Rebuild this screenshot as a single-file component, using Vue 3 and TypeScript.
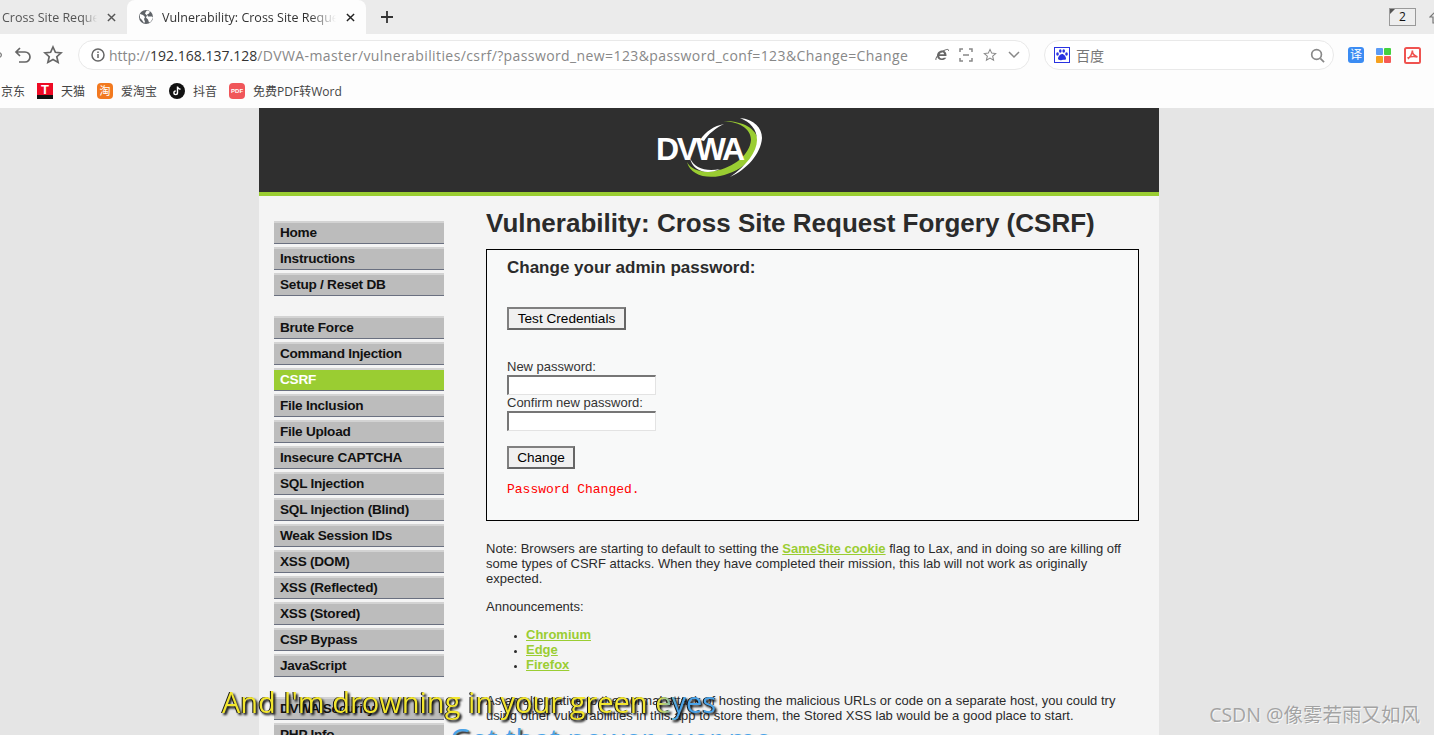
<script setup lang="ts">
const groups: string[][] = [
  ['Home', 'Instructions', 'Setup / Reset DB'],
  ['Brute Force', 'Command Injection', 'CSRF', 'File Inclusion', 'File Upload', 'Insecure CAPTCHA', 'SQL Injection', 'SQL Injection (Blind)', 'Weak Session IDs', 'XSS (DOM)', 'XSS (Reflected)', 'XSS (Stored)', 'CSP Bypass', 'JavaScript'],
  ['DVWA Security', 'PHP Info', 'About'],
]
const announcements = ['Chromium', 'Edge', 'Firefox']
</script>

<template>
  <div class="screen">
    <div class="tabbar">
      <div class="tab">
        <span class="tab-title">Cross Site Request</span>
        <svg class="close" viewBox="0 0 10 10"><path d="M1 1l8 8M9 1l-8 8" /></svg>
      </div>
      <div class="tab active">
        <svg class="globe" viewBox="0 0 16 16"><circle cx="8" cy="8" r="7" fill="#5f6368" /><path d="M2 5l3 1 2 2-1 2 1 3-1 1-2-3-2-2zM9 1.500l3 1-1 2-2 1 1 2 4 0 1 1-2 4-2 1-1-3-2-2 1-2-1-1-1-1 1-2z" fill="#fff" /></svg>
        <span class="tab-title">Vulnerability: Cross Site Request</span>
        <svg class="close dark" viewBox="0 0 10 10"><path d="M1 1l8 8M9 1l-8 8" /></svg>
      </div>
      <svg class="plus" viewBox="0 0 14 14"><path d="M7 1v12M1 7h12" /></svg>
      <div class="tab-count"><i></i>2</div>
      <svg class="pin" viewBox="0 0 14 16"><path d="M1 8l6-6 6 6H10v6H4V8z" /></svg>
    </div>

    <div class="toolbar">
      <svg class="back-tip" viewBox="0 0 2 8"><path d="M-1 1l3 3-3 3" /></svg>
      <svg class="tool undo" viewBox="0 0 18 18"><path d="M6 2L2 6l4 4M2 6h9a4.500 4.500 0 0 1 0 10H5" /></svg>
      <svg class="tool star" viewBox="0 0 20 20"><path d="M10 2l2.400 5.300 5.700.6-4.300 3.800 1.300 5.700L10 14.500l-5.100 2.900 1.300-5.700L1.900 7.900l5.700-.6z" /></svg>
      <div class="address">
        <svg class="info" viewBox="0 0 14 14"><circle cx="7" cy="7" r="6" /><path d="M7 6v4M7 3.500v1.500" /></svg>
        <span class="url"><span class="muted">http://</span>192.168.137.128<span class="muted path">/DVWA-master/vulnerabilities/csrf/?password_new=123&amp;password_conf=123&amp;Change=Change</span></span>
        <div class="address-icons">
          <svg class="ie" viewBox="0 0 14 14"><path d="M3 8h8.500C11.800 4.500 9.800 2.500 7 2.500 4.200 2.500 2 4.800 2 7.800c0 2.600 2 4.200 4.700 4.200 2 0 3.600-.8 4.600-2.300H8.800c-.5.500-1.200.8-2 .8-1.300 0-2.500-.9-2.500-2.500zM4.500 6.300c.2-1.200 1.200-2 2.400-2s2.100.8 2.200 2z" /><path class="ie-ring" d="M1 12c-1-2 3-7 8-9.500 3-1.500 5-1.500 4.500.5" /></svg>
          <svg class="small" viewBox="0 0 14 14"><path d="M1 4V1h3M10 1h3v3M1 10v3h3M10 13h3v-3M4 7h6" /></svg>
          <svg class="small" viewBox="0 0 20 20"><path d="M10 2l2.400 5.300 5.700.6-4.300 3.800 1.300 5.700L10 14.500l-5.100 2.900 1.300-5.700L1.900 7.900l5.700-.6z" /></svg>
          <svg class="small" viewBox="0 0 14 14"><path d="M2 4l5 5 5-5" /></svg>
        </div>
      </div>
      <div class="search">
        <svg class="paw" viewBox="0 0 16 16"><rect x=".5" y=".5" width="15" height="15" fill="#fff" stroke="#2932e1" /><g fill="#2932e1"><ellipse cx="3.500" cy="7" rx="1.300" ry="1.700" /><ellipse cx="6.300" cy="4" rx="1.300" ry="1.700" /><ellipse cx="9.700" cy="4" rx="1.300" ry="1.700" /><ellipse cx="12.500" cy="7" rx="1.300" ry="1.700" /><path d="M8 7c-2 0-4 3-4 4.500S6 13.500 8 13s4 .5 4-1.500S10 7 8 7z" /></g></svg>
        <span class="search-text">百度</span>
        <svg class="magnifier" viewBox="0 0 16 16"><circle cx="7" cy="7" r="5.200" /><path d="M11 11l4 4" /></svg>
      </div>
      <div class="extensions">
        <div class="ext-translate">译</div>
        <div class="ext-grid"><i class="c1"></i><i class="c2"></i><i class="c3"></i><i class="c4"></i></div>
        <svg class="ext-pdf" viewBox="0 0 17 17"><rect x="1" y="1" width="15" height="15" rx="1.500" fill="#fff" stroke="#ef5350" stroke-width="2" /><path d="M8.500 3.500c-1 2 .5 4-4.500 8.500M8.500 3.500c-.5 3 1.500 5 5 6.500M3.500 11c3-1.500 6-2 10-1" fill="none" stroke="#ef5350" stroke-width="1.500" /></svg>
      </div>
    </div>

    <div class="bookmarks">
      <span class="mark first">京东</span>
      <span class="mark-icon tmall">T</span><span class="mark">天猫</span>
      <span class="mark-icon taobao">淘</span><span class="mark">爱淘宝</span>
      <svg class="mark-icon" viewBox="0 0 16 16"><circle cx="8" cy="8" r="8" fill="#111" /><path d="M8.500 3.500v6.300a1.800 1.800 0 1 1-1.800-1.800M8.500 3.500c.3 1.700 1.300 2.600 3 2.800" fill="none" stroke="#fff" stroke-width="1.400" /></svg><span class="mark">抖音</span>
      <span class="mark-icon pdf">PDF</span><span class="mark">免费PDF转Word</span>
    </div>

    <div class="viewport">
      <div class="page">
        <header class="page-header">
          <svg class="logo" viewBox="0 0 110 64">
            <path d="M33 46C36 58 50 63 66 60 90 55 106 38 104 24 102 12 88 4 66 5 84 5 97 12 97 24 96 38 80 52 60 55 48 57 37 54 33 46z" fill="#9acd32" />
            <path d="M86 2C100 3 108 12 108 22 107 38 92 54 76 61 92 50 103 36 103 24 103 13 96 6 86 2z" fill="#fff" />
            <path d="M46 24C52 15 60 10 70 8 62 12 54 18 50 25zM36 42C40 52 52 56 66 53 52 60 38 54 36 42z" fill="#fff" />
            <text x="2" y="44" class="logo-text">DVWA</text>
          </svg>
        </header>
        <div class="page-body">
          <nav class="menu">
            <ul v-for="(group, i) in groups" :key="i">
              <li v-for="item in group" :key="item" :class="{ selected: item === 'CSRF' }">{{ item }}</li>
            </ul>
          </nav>
          <main class="content">
            <h1>Vulnerability: Cross Site Request Forgery (CSRF)</h1>
            <div class="vulnerable-box">
              <h3>Change your admin password:</h3>
              <button class="btn test-btn" type="button">Test Credentials</button>
              <label>New password:</label>
              <input type="password" />
              <label>Confirm new password:</label>
              <input type="password" />
              <button class="btn change-btn" type="button">Change</button>
              <pre>Password Changed.</pre>
            </div>
            <p class="note">Note: Browsers are starting to default to setting the <a>SameSite cookie</a> flag to Lax, and in doing so are killing off some types of CSRF attacks. When they have completed their mission, this lab will not work as originally expected.</p>
            <p class="announce">Announcements:</p>
            <ul class="links">
              <li v-for="name in announcements" :key="name"><a>{{ name }}</a></li>
            </ul>
            <p class="alt">As an alternative to the normal attack of hosting the malicious URLs or code on a separate host, you could try using other vulnerabilities in this app to store them, the Stored XSS lab would be a good place to start.</p>
          </main>
        </div>
      </div>
      <div class="subtitle line-one">And I'm drowning in your green eyes</div>
      <div class="subtitle line-two">Get that power over me</div>
      <div class="watermark">CSDN @像雾若雨又如风</div>
    </div>
  </div>
</template>

<style scoped>
.screen {
  width: 1434px;
  height: 735px;
  overflow: hidden;
  display: flex;
  flex-direction: column;
  font-family: "Open Sans", "Noto Sans CJK SC", sans-serif;
  background: #e5e5e5;
}

.tabbar {
  height: 34px;
  flex: none;
  display: flex;
  align-items: center;
  background: #ebebeb;
  padding-left: 2px;
}

.tab {
  display: flex;
  align-items: center;
  height: 34px;
  width: 125px;
  flex: none;
  font-size: 12.500px;
  color: #555;
}

.tab-title {
  width: 95px;
  overflow: hidden;
  white-space: nowrap;
  -webkit-mask-image: linear-gradient(to right, #000 85%, transparent);
  mask-image: linear-gradient(to right, #000 85%, transparent);
}

.close {
  width: 9px;
  height: 9px;
  margin-left: 10px;
  fill: none;
  stroke: #555;
  stroke-width: 1.600;
}

.close.dark {
  stroke: #222;
}

.tab.active {
  width: 239px;
  background: #fdfdfd;
  border-radius: 8px 8px 0 0;
  padding-left: 11px;
  box-sizing: border-box;
  color: #333;
}

.tab.active .tab-title {
  width: 174px;
  margin-left: 8px;
}

.tab.active .close {
  margin-left: 10px;
}

.globe {
  width: 16px;
  height: 16px;
}

.plus {
  width: 14px;
  height: 14px;
  margin-left: 14px;
  fill: none;
  stroke: #333;
  stroke-width: 1.800;
}

.tab-count {
  position: relative;
  margin-left: auto;
  width: 25px;
  height: 16px;
  border: 1px solid #999;
  font-size: 12px;
  line-height: 16px;
  text-align: center;
  color: #111;
  background: #eee;
}

.tab-count i {
  position: absolute;
  left: 0;
  top: 0;
  border-top: 5px solid #555;
  border-right: 5px solid transparent;
}

.pin {
  width: 14px;
  height: 16px;
  flex: none;
  margin-left: 13px;
  margin-right: -9px;
  fill: none;
  stroke: #777;
  stroke-width: 1.200;
}

.toolbar {
  height: 39px;
  flex: none;
  display: flex;
  align-items: center;
  background: #fdfdfd;
  padding-top: 3px;
  box-sizing: border-box;
}

.back-tip {
  width: 2px;
  height: 8px;
  flex: none;
  fill: none;
  stroke: #888;
  stroke-width: 1.500;
}

.tool {
  fill: none;
  stroke: #666;
  stroke-width: 1.700;
}

.undo {
  width: 18px;
  height: 18px;
  margin-left: 12px;
}

.star {
  width: 20px;
  height: 20px;
  margin-left: 11px;
}

.address {
  width: 952px;
  height: 30px;
  margin-left: 15px;
  display: flex;
  align-items: center;
  box-sizing: border-box;
  border: 1px solid #e9e9e9;
  border-radius: 15px;
  background: #fff;
  padding-left: 12px;
}

.info {
  width: 14px;
  height: 14px;
  flex: none;
  fill: none;
  stroke: #666;
  stroke-width: 1.500;
}

.url {
  margin-left: 4px;
  width: 807px;
  font-size: 14px;
  white-space: nowrap;
  color: #333;
}

.muted {
  color: #888;
}

.path {
  letter-spacing: .4px;
}

.address-icons {
  display: flex;
  align-items: center;
  gap: 10px;
  margin-left: 19px;
}

.ie {
  width: 14px;
  height: 14px;
  fill: #666;
}

.ie-ring {
  fill: none;
  stroke: #666;
  stroke-width: 1;
}

.small {
  width: 14px;
  height: 14px;
  fill: none;
  stroke: #888;
  stroke-width: 1.500;
}

.search {
  width: 290px;
  height: 30px;
  margin-left: 14px;
  display: flex;
  align-items: center;
  box-sizing: border-box;
  border: 1px solid #e9e9e9;
  border-radius: 15px;
  background: #fff;
  padding: 0 8px 0 9px;
}

.paw {
  width: 16px;
  height: 16px;
}

.search-text {
  margin-left: 6px;
  font-size: 14px;
  color: #777;
}

.magnifier {
  width: 15px;
  height: 15px;
  margin-left: auto;
  fill: none;
  stroke: #888;
  stroke-width: 1.800;
}

.extensions {
  display: flex;
  align-items: center;
  margin-left: 14px;
  gap: 12px;
}

.ext-translate {
  width: 16px;
  height: 16px;
  border-radius: 3px;
  background: #3b8cf3;
  color: #fff;
  font-size: 12px;
  line-height: 16px;
  text-align: center;
}

.ext-grid {
  display: grid;
  grid-template-columns: 7px 7px;
  gap: 1px;
  width: 16px;
}

.ext-grid i {
  height: 7px;
  border-radius: 1px;
}

.c1 { background: #5b9bf5; }
.c2 { background: #43d13f; }
.c3 { background: #f5a11f; }
.c4 { background: #f55a56; }

.ext-pdf {
  width: 17px;
  height: 17px;
}

.bookmarks {
  height: 35px;
  flex: none;
  display: flex;
  align-items: center;
  background: #fdfdfd;
  padding-left: 1px;
  font-size: 12px;
  color: #444;
}

.mark {
  margin-left: 8px;
  margin-right: 12px;
  white-space: nowrap;
}

.mark.first {
  margin-left: 0;
}

.mark-icon {
  width: 16px;
  height: 16px;
  flex: none;
  display: block;
  text-align: center;
}

.tmall {
  background: linear-gradient(#ee0a24 78%, #111 78%);
  color: #fff;
  font: bold 13px/14px "Liberation Sans", sans-serif;
}

.taobao {
  background: #f2791f;
  border-radius: 4px;
  color: #fff;
  font-size: 11px;
  line-height: 16px;
}

.pdf {
  background: #f0565a;
  border-radius: 4px;
  color: #fff;
  font: bold 6px/16px "Liberation Sans", sans-serif;
}

.viewport {
  flex: 1;
  position: relative;
  min-height: 0;
  overflow: hidden;
}

.page {
  width: 900px;
  margin-left: 259px;
  background: #f4f4f4;
  color: #2b2b2b;
  font-family: "Liberation Sans", Arial, sans-serif;
}

.page-header {
  height: 84px;
  background: #2f2f2f;
  border-bottom: 4px solid #9acd32;
  display: flex;
  justify-content: center;
}

.logo {
  width: 110px;
  height: 64px;
  margin-top: 8px;
}

.logo-text {
  font: bold 32px "Liberation Sans", sans-serif;
  fill: #fff;
  letter-spacing: -2.300px;
}

.page-body {
  display: flex;
  padding: 12px 20px 0 15px;
}

.menu {
  width: 170px;
  flex: none;
  margin-top: 13px;
  margin-right: 42px;
}

.menu ul {
  list-style: none;
  margin: 0 0 20px;
  padding: 0;
}

.menu li {
  height: 23px;
  margin-bottom: 3px;
  box-sizing: border-box;
  padding-left: 6px;
  background: #bcbcbc;
  border-top: 2px solid #d3d3d3;
  border-bottom: 1px solid #6a7080;
  font-size: 13.600px;
  letter-spacing: -.25px;
  font-weight: bold;
  line-height: 19px;
  color: #111;
}

.menu li.selected {
  background: #9acd32;
  color: #fff;
}

.content {
  flex: 1;
  min-width: 0;
}

h1 {
  margin: 0 0 11px;
  font-size: 26px;
  line-height: 30px;
  font-weight: bold;
  color: #2b2b2b;
}

.vulnerable-box {
  height: 272px;
  box-sizing: border-box;
  border: 1px solid #000;
  background: #f8f9f9;
  padding: 8px 20px 0;
}

h3 {
  margin: 0 0 29px;
  font-size: 17px;
  line-height: 20px;
  font-weight: bold;
}

.btn {
  display: block;
  height: 23px;
  box-sizing: border-box;
  padding: 0 0 1px;
  border: 2px solid #666;
  border-top-color: #808080;
  border-left-color: #808080;
  background: #f0f0f0;
  font: 13.600px "Liberation Sans", sans-serif;
  color: #000;
}

.test-btn {
  width: 119px;
  margin-bottom: 29px;
}

.change-btn {
  width: 68px;
  margin-top: 15px;
}

label {
  display: block;
  height: 16px;
  font-size: 13px;
  line-height: 16px;
  color: #333;
}

input {
  display: block;
  width: 149px;
  height: 20px;
  box-sizing: border-box;
  margin: 0;
  padding: 0;
  border: 1px solid #e3e3e3;
  border-top: 2px solid #767676;
  border-left: 2px solid #767676;
  background: #fff;
}

pre {
  margin: 13px 0 0;
  font: 13px/16px "Liberation Mono", monospace;
  color: #f00;
}

p {
  margin: 0;
  font-size: 13px;
  line-height: 15px;
}

a {
  color: #9acd32;
  font-weight: bold;
  text-decoration: underline;
}

.note {
  margin-top: 20px;
}

.announce {
  margin-top: 13px;
}

.links {
  margin: 13px 0 21px;
  padding: 0 0 0 40px;
  font-size: 13px;
  line-height: 15px;
}

.links li::marker {
  font-size: 9px;
}

.subtitle {
  position: absolute;
  white-space: nowrap;
  font-family: "Open Sans", sans-serif;
  font-size: 29px;
  line-height: 36px;
  color: #f2e62e;
  text-shadow: 2px 2px 2px #111;
}

.line-one {
  left: 222px;
  top: 576px;
  background: linear-gradient(to right, #f2e62e 88%, #4aa3e8 92%);
  -webkit-background-clip: text;
  background-clip: text;
  color: transparent;
  text-shadow: none;
  filter: drop-shadow(-1px 0 0 #111) drop-shadow(2px 2px 1px #111);
}

.line-two {
  left: 450px;
  top: 613px;
  color: #4aa3e8;
}

.watermark {
  position: absolute;
  right: 14px;
  top: 596px;
  font-size: 19.500px;
  line-height: 22px;
  color: rgba(150, 150, 150, .85);
  text-shadow: 1px 1px 0 rgba(255, 255, 255, .7);
}
</style>

<style>
html,
body {
  margin: 0;
  overflow: hidden;
}
</style>
